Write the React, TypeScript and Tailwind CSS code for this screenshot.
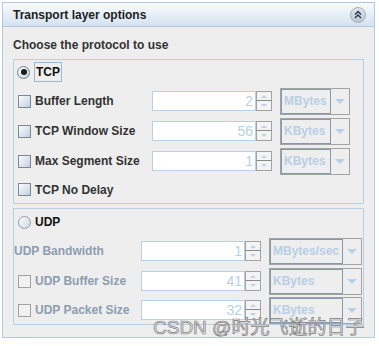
import React from 'react';

const FONT = "font-['Liberation_Sans',Arial,sans-serif]";

function Check({ disabled }: { disabled?: boolean }) {
  return (
    <span
      className={`inline-block h-[13px] w-[13px] shrink-0 border ${
        disabled
          ? 'border-[#a0a0a0] bg-[#f2f2f2]'
          : 'border-[#7b8898] bg-gradient-to-br from-[#fbfcfd] to-[#c3d1df]'
      }`}
    />
  );
}

function Radio({ checked }: { checked?: boolean }) {
  return (
    <span
      className={`flex h-[13px] w-[13px] shrink-0 items-center justify-center rounded-full border ${
        checked
          ? 'border-[#6f7f90] bg-gradient-to-br from-[#ffffff] to-[#c4d2e0]'
          : 'border-[#8c9bab] bg-gradient-to-br from-[#ffffff] to-[#cad7e4]'
      }`}
    >
      {checked && <span className="h-[6px] w-[6px] rounded-full bg-[#1c1c1c]" />}
    </span>
  );
}

function Spinner() {
  return (
    <div className="flex h-[20px] w-[16px] shrink-0 flex-col">
      <div className="flex h-[10px] items-center justify-center border border-[#a3a3a3] bg-[#f4f4f4]">
        <span className="h-0 w-0 border-x-[3px] border-b-[3px] border-x-transparent border-b-[#c3d2e1]" />
      </div>
      <div className="-mt-px flex h-[11px] items-center justify-center border border-[#a3a3a3] border-t-[#8a8a8a] bg-[#f4f4f4]">
        <span className="h-0 w-0 border-x-[3px] border-t-[3px] border-x-transparent border-t-[#c3d2e1]" />
      </div>
    </div>
  );
}

function Combo({ unit, width }: { unit: string; width: string }) {
  return (
    <div className={`flex h-[27px] ${width} shrink-0 border border-[#a3a3a3]`}>
      <div className="flex flex-1 items-center border border-[#8498ae] pl-[2px] text-[12px] font-bold text-[#b8cfe5]">
        {unit}
      </div>
      <div className="flex w-[18px] items-center justify-center">
        <span className="h-0 w-0 border-x-[5px] border-t-[5px] border-x-transparent border-t-[#b8cfe5]" />
      </div>
    </div>
  );
}

type RowProps = {
  label: string;
  value: string;
  unit: string;
  labelWidth: string;
  comboWidth: string;
  height: string;
  checkbox?: boolean;
  disabled?: boolean;
};

function OptionRow({ label, value, unit, labelWidth, comboWidth, height, checkbox = true, disabled }: RowProps) {
  return (
    <div className={`flex ${height} items-center`}>
      <div className={`flex ${labelWidth} shrink-0 items-center gap-[4px] ${checkbox ? 'pl-[4px]' : ''}`}>
        {checkbox && <Check disabled={disabled} />}
        <span className={`text-[12px] font-bold ${disabled ? 'text-[#8c9db0]' : 'text-[#333333]'}`}>{label}</span>
      </div>
      <div className="flex h-[20px] w-[104px] shrink-0 items-center justify-end border border-[#b8cfe5] bg-white pr-[2px] text-[14px] text-[#b8cfe5]">
        {value}
      </div>
      <Spinner />
      <div className="ml-[8px]">
        <Combo unit={unit} width={comboWidth} />
      </div>
    </div>
  );
}

export default function App() {
  return (
    <div className={`h-[346px] w-[379px] bg-white pl-[2px] pt-[2px] ${FONT}`}>
      <div className="relative h-[336px] w-[373px] border border-[#b3c9df] bg-[#eeeeee]">
        <div className="flex h-[24px] items-center justify-between border-b border-[#b3c9df] bg-gradient-to-b from-[#f8fbfd] to-[#d4e2f0] pl-[10px] pr-[8px]">
          <span className="text-[12px] font-bold text-[#1e1e1e]">Transport layer options</span>
          <span className="flex h-[16px] w-[16px] items-center justify-center rounded-full border border-[#9fb0c2] bg-gradient-to-b from-[#dde6ef] to-[#b9c8d8]">
            <svg width="8" height="9" viewBox="0 0 8 9" fill="none" stroke="#2a3440" strokeWidth="1.4">
              <path d="M1 4.5 L4 1.5 L7 4.5" />
              <path d="M1 8 L4 5 L7 8" />
            </svg>
          </span>
        </div>

        <div className="pl-[10px] pt-[10px]">
          <div className="flex h-[16px] items-center text-[12px] font-bold text-[#333333]">Choose the protocol to use</div>

          <div className="mt-[6px] w-[351px] border border-[#b8cfe5] pt-[2px]">
            <div className="flex h-[20px] items-center pl-[3px]">
              <Radio checked />
              <span className="ml-[4px] flex h-[20px] items-center border border-[#a3b8cd] px-[1px] text-[12px] font-bold text-[#111111]">
                TCP
              </span>
            </div>
            <div className="mt-[4px]">
              <OptionRow label="Buffer Length" value="2" unit="MBytes" labelWidth="w-[138px]" comboWidth="w-[70px]" height="h-[30px]" />
              <OptionRow label="TCP Window Size" value="56" unit="KBytes" labelWidth="w-[138px]" comboWidth="w-[70px]" height="h-[30px]" />
              <OptionRow label="Max Segment Size" value="1" unit="KBytes" labelWidth="w-[138px]" comboWidth="w-[70px]" height="h-[30px]" />
              <div className="flex h-[27px] items-center gap-[4px] pl-[4px]">
                <Check />
                <span className="text-[12px] font-bold text-[#333333]">TCP No Delay</span>
              </div>
            </div>
          </div>

          <div className="mt-[4px] w-[351px] border border-[#b8cfe5] pt-[3px]">
            <div className="flex h-[20px] items-center pl-[4px]">
              <Radio />
              <span className="ml-[4px] text-[12px] font-bold text-[#111111]">UDP</span>
            </div>
            <div className="mt-[4px]">
              <OptionRow label="UDP Bandwidth" value="1" unit="MBytes/sec" labelWidth="w-[127px]" comboWidth="w-[93px]" height="h-[30px]" checkbox={false} disabled />
              <OptionRow label="UDP Buffer Size" value="41" unit="KBytes" labelWidth="w-[127px]" comboWidth="w-[93px]" height="h-[30px]" disabled />
              <OptionRow label="UDP Packet Size" value="32" unit="KBytes" labelWidth="w-[127px]" comboWidth="w-[93px]" height="h-[28px]" disabled />
            </div>
          </div>
        </div>

        <div className="pointer-events-none absolute left-[150px] top-[314px] whitespace-nowrap font-['Liberation_Sans','Noto_Sans_CJK_SC',sans-serif] text-[19px] leading-[22px] text-[#ededed] [-webkit-text-stroke:0.7px_#7d7d7d]">
          CSDN @时光飞逝的日子
        </div>
      </div>
    </div>
  );
}
